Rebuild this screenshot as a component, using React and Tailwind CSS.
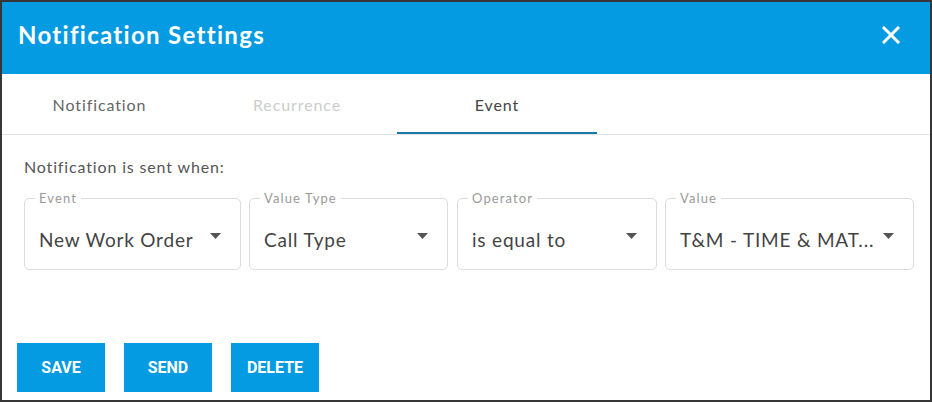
import React from "react";

const font = { fontFamily: "Lato, 'Noto Sans', sans-serif" };

function Caret() {
  return (
    <svg width="11" height="6" viewBox="0 0 11 6" className="shrink-0">
      <path d="M0 0 L11 0 L5.5 6 Z" fill="#555" />
    </svg>
  );
}

function Field({ label, value, className }) {
  return (
    <div className={`relative h-[72px] shrink-0 rounded-[5px] border border-[#dcdcdc] flex items-center pl-[14px] pr-[19px] ${className}`}>
      <span className="absolute left-[10px] top-[-9px] bg-white px-[4px] text-[13px] tracking-[1.1px] leading-[16px] text-[#9a9a9a]">{label}</span>
      <div className="flex items-center w-full justify-between pt-[12px]">
        <span className="text-[19px] tracking-[0.8px] text-[#444] whitespace-nowrap">{value}</span>
        <div className="mt-[-8px]"><Caret /></div>
      </div>
    </div>
  );
}

export default function App() {
  return (
    <div style={font} className="w-[932px] h-[402px] border-2 border-[#363636] bg-white flex flex-col overflow-hidden">
      <div className="h-[72px] bg-[#049be3] flex items-center justify-between pl-[16px] pr-[30px] pb-[6px] shrink-0">
        <span className="text-white text-[24px] font-bold tracking-[1.3px]">Notification Settings</span>
        <svg width="18" height="18" viewBox="0 0 18 18">
          <path d="M2 2 L16 16 M16 2 L2 16" stroke="white" strokeWidth="3" strokeLinecap="square" />
        </svg>
      </div>
      <div className="h-[61px] border-b border-[#e2e2e2] flex shrink-0">
        <div className="w-[195px] flex items-center justify-center text-[16px] tracking-[0.9px] text-[#666] pt-[1px]">Notification</div>
        <div className="w-[200px] flex items-center justify-center text-[16px] tracking-[0.9px] text-[#cdcdcd] pt-[1px]">Recurrence</div>
        <div className="w-[200px] flex items-center justify-center text-[16px] tracking-[0.9px] text-[#444] border-b-2 border-[#1a78ab] pt-[3px]">Event</div>
      </div>
      <div className="flex-1 flex flex-col pl-[22px]">
        <div className="text-[16px] tracking-[0.85px] text-[#555] mt-[22px] leading-[20px]">Notification is sent when:</div>
        <div className="flex mt-[21px]">
          <Field label="Event" value="New Work Order" className="w-[217px]" />
          <Field label="Value Type" value="Call Type" className="w-[199px] ml-[8px]" />
          <Field label="Operator" value="is equal to" className="w-[200px] ml-[9px]" />
          <Field label="Value" value="T&M - TIME & MAT..." className="w-[249px] ml-[8px]" />
        </div>
      </div>
      <div className="flex gap-[19px] pl-[15px] pb-[8px]" style={{ fontFamily: "Roboto, sans-serif" }}>
        {["SAVE", "SEND", "DELETE"].map((b) => (
          <div key={b} className="w-[88px] h-[49px] bg-[#049be3] text-white font-bold text-[16px] flex items-center justify-center">{b}</div>
        ))}
      </div>
    </div>
  );
}
